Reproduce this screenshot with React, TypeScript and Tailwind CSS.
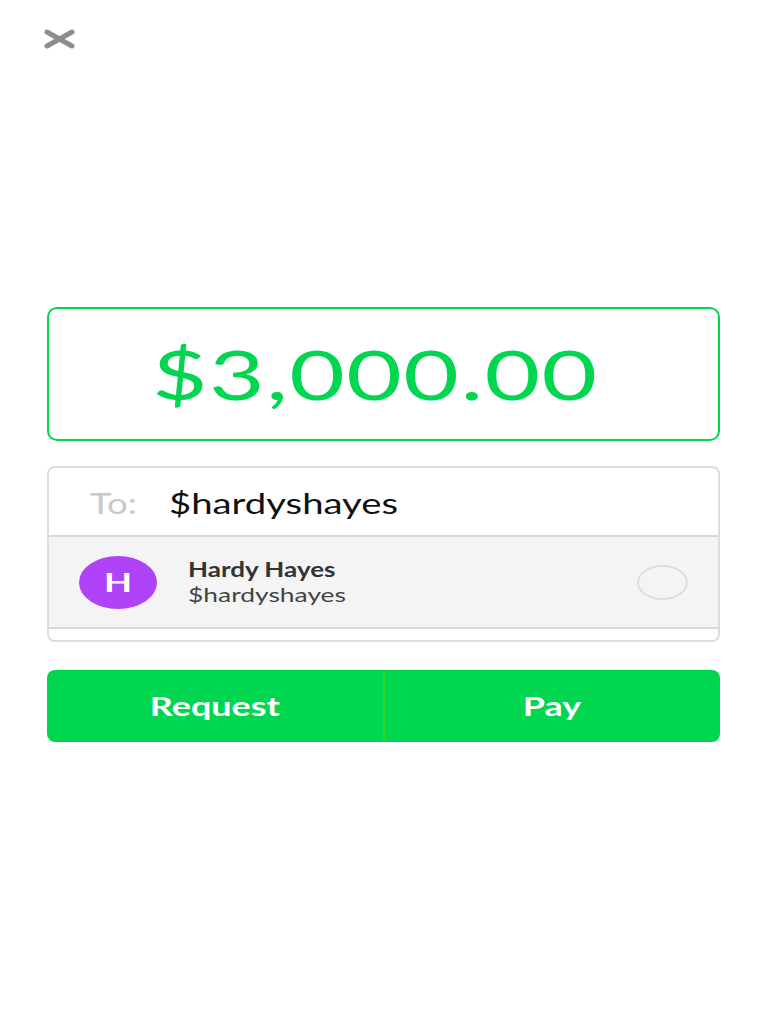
import React from 'react';

// wide geometric look of the original font: stretch text horizontally
const wide = "inline-block origin-left";

export default function App() {
  return (
    <div className="w-full min-h-[1024px] bg-white font-['Lato','Open_Sans',sans-serif]">
      {/* close */}
      <div className="pt-[29px] pl-[44px] h-[307px]">
        <svg width="31" height="20" viewBox="0 0 31 20">
          <path d="M3 3 L28 17 M28 3 L3 17" stroke="#8c8c8c" strokeWidth="5" strokeLinecap="round" />
        </svg>
      </div>

      <div className="px-[47px] pr-[48px] flex flex-col">
        {/* amount */}
        <div className="h-[134px] border-2 border-[#00d64f] rounded-[10px] flex items-center justify-center">
          <span className="inline-block mr-[16px] text-[68px] leading-none text-[#00d64f] scale-x-[1.41] tracking-[1px]">$3,000.00</span>
        </div>

        {/* recipient */}
        <div className="mt-[25px] border-2 border-[#dcdcdc] rounded-[8px] overflow-hidden">
          <div className="h-[69px] pt-[3px] flex items-center border-b-2 border-[#d8d8d8]">
            <span className={`${wide} ml-[41px] w-[79px] text-[28px] text-[#c8c8c8] scale-x-[1.3]`}>To:</span>
            <span className={`${wide} text-[29px] text-[#111] scale-x-[1.32]`}>$hardyshayes</span>
          </div>
          <div className="h-[92px] bg-[#f4f4f4] flex items-center border-b-2 border-[#d8d8d8]">
            <div className="ml-[30px] w-[78px] h-[53px] rounded-[50%] bg-[#b043f7] flex items-center justify-center">
              <span className="inline-block text-white font-bold text-[26px] scale-x-[1.4]">H</span>
            </div>
            <div className="ml-[31px] flex flex-col">
              <span className={`${wide} text-[20px] font-bold text-[#333] scale-x-[1.3] leading-[25px]`}>Hardy Hayes</span>
              <span className={`${wide} text-[20px] text-[#444] scale-x-[1.32] leading-[25px]`}>$hardyshayes</span>
            </div>
            <div className="ml-auto mr-[30px] w-[51px] h-[35px] rounded-[50%] border-2 border-[#dedede]" />
          </div>
          <div className="h-[11px] bg-white" />
        </div>

        {/* actions */}
        <div className="mt-[28px] h-[72px] rounded-[8px] bg-[#00d64f] flex overflow-hidden">
          <div className="flex-1 flex items-center justify-center border-r-2 border-[#2fd62a]">
            <span className="inline-block text-white font-bold text-[27px] scale-x-[1.33]">Request</span>
          </div>
          <div className="flex-1 flex items-center justify-center">
            <span className="inline-block text-white font-bold text-[27px] scale-x-[1.33]">Pay</span>
          </div>
        </div>
      </div>
    </div>
  );
}
